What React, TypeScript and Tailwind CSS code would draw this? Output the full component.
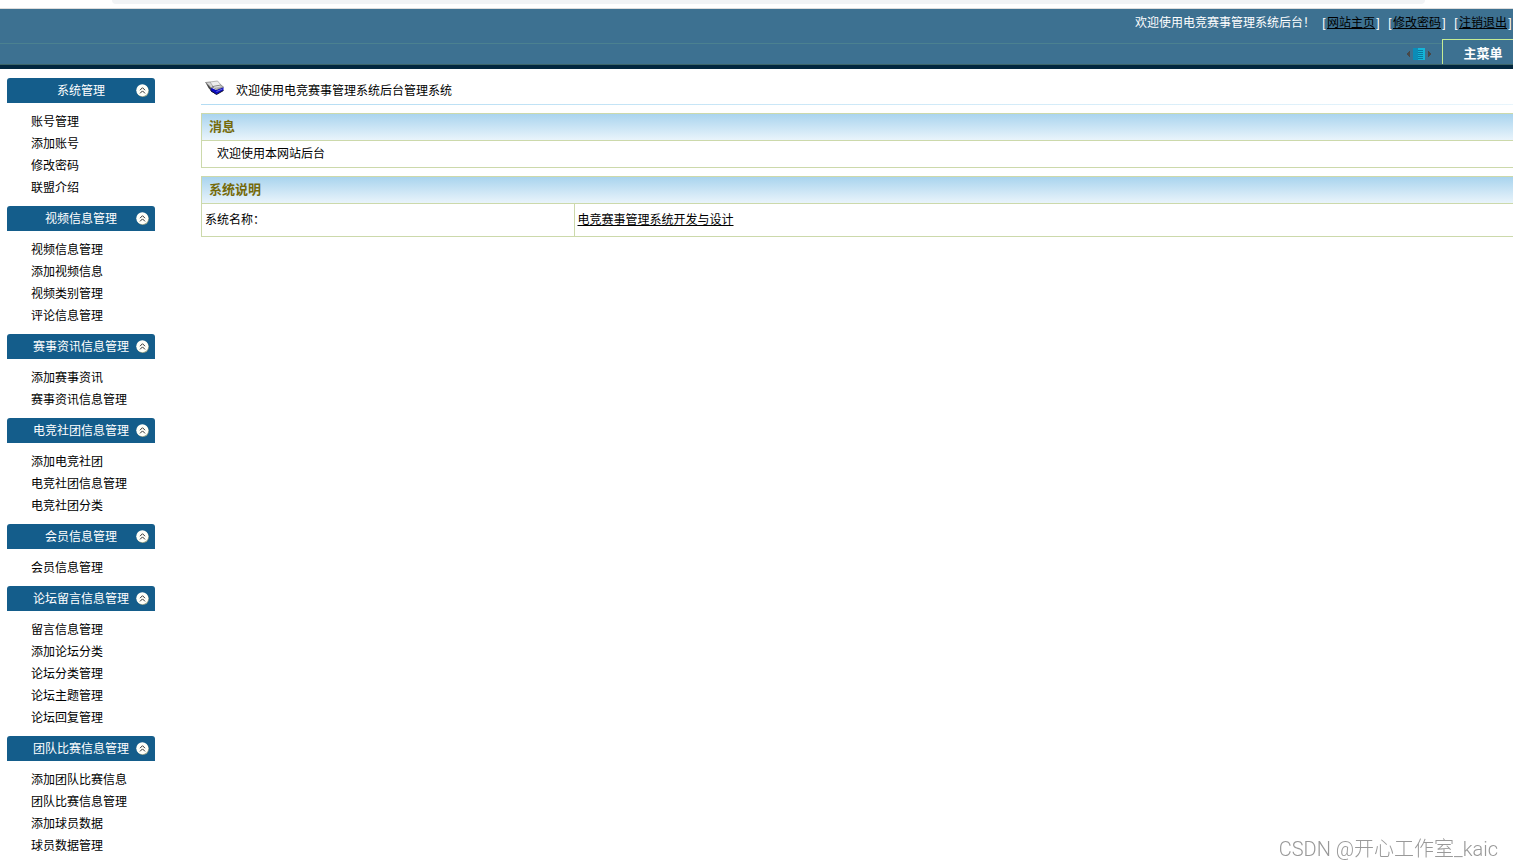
import React, { useState } from "react";

interface MenuGroup {
  title: string;
  items: string[];
}

const menu: MenuGroup[] = [
  { title: "系统管理", items: ["账号管理", "添加账号", "修改密码", "联盟介绍"] },
  { title: "视频信息管理", items: ["视频信息管理", "添加视频信息", "视频类别管理", "评论信息管理"] },
  { title: "赛事资讯信息管理", items: ["添加赛事资讯", "赛事资讯信息管理"] },
  { title: "电竞社团信息管理", items: ["添加电竞社团", "电竞社团信息管理", "电竞社团分类"] },
  { title: "会员信息管理", items: ["会员信息管理"] },
  { title: "论坛留言信息管理", items: ["留言信息管理", "添加论坛分类", "论坛分类管理", "论坛主题管理", "论坛回复管理"] },
  { title: "团队比赛信息管理", items: ["添加团队比赛信息", "团队比赛信息管理", "添加球员数据", "球员数据管理"] },
];

const topLinks = ["网站主页", "修改密码", "注销退出"];

function CollapseIcon({ open }: { open: boolean }) {
  return (
    <svg className={`w-[13px] h-[13px] ${open ? "" : "rotate-180"}`} viewBox="0 0 13 13" fill="none">
      <circle cx="6.9" cy="6.9" r="6" fill="#9aa58c" />
      <circle cx="6.3" cy="6.3" r="6" fill="#fffff8" />
      <path d="M4 6.2 6.5 3.7 9 6.2M4 9.4 6.5 6.9 9 9.4" stroke="#333" strokeWidth="1" />
    </svg>
  );
}

function BookIcon() {
  return (
    <svg className="w-5 h-4" viewBox="0 0 20 16">
      <path d="M0.500 2.500 4 4 7 8 6.500 11.500 3.500 8Z" fill="#444" />
      <path d="M6 7.500 11 10 18.500 7V10.500L11.500 14.500 6 11.500Z" fill="#0a0ac0" />
      <path d="M5.500 10.500 11.500 14.500 18.500 10.500" stroke="#15152a" strokeWidth="1" fill="none" />
      <path d="M0.500 2.500 5 2 8 4.500 7.500 8 5.500 7.500 3.500 5Z" fill="#d6d6d6" stroke="#777" strokeWidth="0.7" />
      <path d="M5 2 12.500 1 16 5 8 6.500Z" fill="#ededed" stroke="#999" strokeWidth="0.7" />
      <path d="M7.500 6.700 16 5 18.500 7 11.500 9.700Z" fill="#b9b9b9" stroke="#666" strokeWidth="0.6" />
      <path d="M9 7.300 15.500 6" stroke="#eee" strokeWidth="0.8" />
      <path d="M11.500 11.500 17.500 9" stroke="#8a8ae8" strokeWidth="0.8" />
    </svg>
  );
}

function SwitchIcon() {
  return (
    <svg className="w-[26px] h-3" viewBox="0 0 26 12" shapeRendering="crispEdges">
      <path d="M1 5h1v-1h1v-1h1v6h-1v-1h-1v-1h-1ZM25 5h-1v-1h-1v-1h-1v6h1v-1h1v-1h1Z" fill="#484848" />
      <path d="M7 0h12v12H7Z" fill="#14b4d8" />
      <path d="M7 0h5v12H7Z" fill="#0b8cb8" />
      <path d="M12 2.500h5M12 4.500h5M12 6.500h5M12 8.500h5M12 10.500h5" stroke="#0878a0" />
    </svg>
  );
}

function SideGroup({ title, items }: MenuGroup) {
  const [open, setOpen] = useState(true);

  return (
    <section>
      <button
        type="button"
        className="relative w-full h-[25px] flex items-center justify-center rounded-t-[3px] bg-[#145d8b] text-white cursor-pointer"
        onClick={() => setOpen(!open)}
      >
        {title}
        <span className="absolute right-1.5 top-1.5">
          <CollapseIcon open={open} />
        </span>
      </button>
      <ul className="pt-2 pb-[7px] pl-6">
        {open &&
          items.map((item) => (
            <li key={item} className="h-[22px] leading-[22px] whitespace-nowrap">
              <a href="#">{item}</a>
            </li>
          ))}
      </ul>
    </section>
  );
}

export default function App() {
  return (
    <div className="min-h-screen bg-white text-black text-[12px] leading-[18px] font-['Liberation_Sans','Noto_Sans_CJK_SC',sans-serif]">
      {/* Address bar edge */}
      <div className="h-[9px] pl-28 pr-[88px] border-b border-[#dcdcdc]">
        <div className="h-1 rounded-b-lg bg-[#f1f3f5]" />
      </div>

      <header className="bg-[#3d7191] text-white border-b-4 border-[#02273f]">
        <div className="h-[35px] flex justify-end pt-[5px] border-b border-[#4b8190] whitespace-nowrap">
          <span className="mr-1.5">欢迎使用电竞赛事管理系统后台！</span>
          <nav className="flex gap-1.5">
            {topLinks.map((link) => (
              <span key={link} className="flex">
                <span className="w-1.5 text-center">[</span>
                <a href="#" className="text-black underline">{link}</a>
                <span className="w-1.5 text-center">]</span>
              </span>
            ))}
          </nav>
        </div>
        <div className="h-[21px] flex justify-end items-end border-b border-[#3b6468]">
          <button type="button" className="mr-2.5 mb-1 cursor-pointer" aria-label="切换菜单">
            <SwitchIcon />
          </button>
          <button
            type="button"
            className="w-[71px] h-[25px] pl-2.5 pt-1 border-t border-l border-[#c5ec94] bg-[#3d7191] text-[13px] font-bold cursor-pointer"
          >
            主菜单
          </button>
        </div>
      </header>

      <div className="flex items-start">
        <aside className="w-[148px] ml-[7px] mt-[9px] shrink-0">
          {menu.map((group) => (
            <SideGroup key={group.title} {...group} />
          ))}
        </aside>

        <main className="flex-1 min-w-0 ml-[46px]">
          <div className="h-[35px] flex items-center pl-1 pt-2">
            <div className="mb-1.5 mr-[11px]">
              <BookIcon />
            </div>
            <h1>欢迎使用电竞赛事管理系统后台管理系统</h1>
          </div>
          <div className="h-px bg-linear-to-r from-[#b3dcf3] to-[#e8f5fc]" />

          <section className="mt-2 border-y border-l border-[#ccd9ab]">
            <h2 className="h-[27px] pl-[7px] leading-[26px] text-[13px] font-bold text-[#756a0a] bg-linear-to-b from-[#a9d4ee] to-[#e9f4fb] border-b border-[#ccd9ab]">
              消息
            </h2>
            <p className="h-[26px] pl-[15px] leading-[26px]">欢迎使用本网站后台</p>
          </section>

          <section className="mt-2 border-y border-l border-[#ccd9ab]">
            <h2 className="h-[27px] pl-[7px] leading-[26px] text-[13px] font-bold text-[#756a0a] bg-linear-to-b from-[#a9d4ee] to-[#e9f4fb] border-b border-[#ccd9ab]">
              系统说明
            </h2>
            <table className="w-full table-fixed">
              <tbody>
                <tr className="h-8">
                  <th scope="row" className="w-[372px] pl-[3px] text-left font-normal border-r border-[#ccd9ab]">
                    系统名称：
                  </th>
                  <td className="pl-[3px]">
                    <a href="#" className="underline">电竞赛事管理系统开发与设计</a>
                  </td>
                </tr>
              </tbody>
            </table>
          </section>
        </main>
      </div>

      <div className="fixed right-[15px] bottom-1 text-[20px] leading-[30px] text-[#999] font-['Roboto','Noto_Sans_CJK_SC',sans-serif] font-light pointer-events-none">
        CSDN @开心工作室_kaic
      </div>
    </div>
  );
}
